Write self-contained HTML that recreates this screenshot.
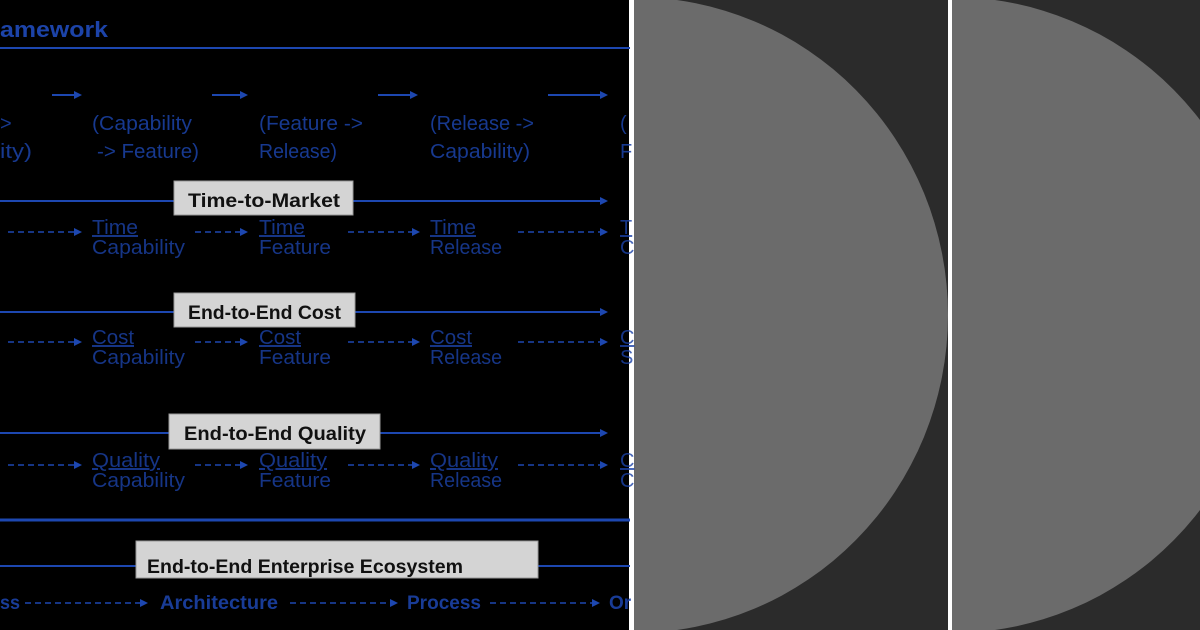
<!DOCTYPE html>
<html><head><style>
html,body{margin:0;padding:0;width:1200px;height:630px;overflow:hidden;background:#2b2b2b}
</style></head><body>
<svg width="1200" height="630" xmlns="http://www.w3.org/2000/svg" style="position:absolute;left:0;top:0">
<defs>
<marker id="ah" markerWidth="8" markerHeight="8" refX="6" refY="4" orient="auto" markerUnits="userSpaceOnUse"><path d="M0,0 L8,4 L0,8 z" fill="#1d47b0"/></marker>
<clipPath id="c1"><rect x="634" y="0" width="314" height="630"/></clipPath>
<clipPath id="c2"><rect x="952" y="0" width="248" height="630"/></clipPath>
</defs>
<rect x="0" y="0" width="630" height="630" fill="#000"/>
<rect x="629" y="0" width="5" height="630" fill="#fff"/>
<rect x="634" y="0" width="315" height="630" fill="#2b2b2b"/>
<ellipse cx="634" cy="315" rx="314" ry="318" fill="#6b6b6b" clip-path="url(#c1)"/>
<rect x="948" y="0" width="4" height="630" fill="#fff"/>
<ellipse cx="952" cy="315" rx="314" ry="318" fill="#6b6b6b" clip-path="url(#c2)"/>
<g font-family="Liberation Sans, sans-serif" fill="#1c43a8">
<text x="0" y="37" font-size="22" font-weight="bold" textLength="108" lengthAdjust="spacingAndGlyphs">amework</text>
<line x1="0" y1="48" x2="630" y2="48" stroke="#1d47b0" stroke-width="2"/>
<g stroke="#1d47b0" stroke-width="2" marker-end="url(#ah)">
<line x1="52" y1="95" x2="80" y2="95"/><line x1="212" y1="95" x2="246" y2="95"/>
<line x1="378" y1="95" x2="416" y2="95"/><line x1="548" y1="95" x2="606" y2="95"/>
</g>
<g font-size="20" opacity="0.85">
<text x="0" y="130">&gt;</text><text x="92" y="130" textLength="100" lengthAdjust="spacingAndGlyphs">(Capability</text><text x="259" y="130" textLength="104" lengthAdjust="spacingAndGlyphs">(Feature -&gt;</text><text x="430" y="130" textLength="104" lengthAdjust="spacingAndGlyphs">(Release -&gt;</text><text x="620" y="130">(</text>
<text x="0" y="158" textLength="32" lengthAdjust="spacingAndGlyphs">ity)</text><text x="97" y="158" textLength="102" lengthAdjust="spacingAndGlyphs">-&gt; Feature)</text><text x="259" y="158" textLength="78" lengthAdjust="spacingAndGlyphs">Release)</text><text x="430" y="158" textLength="100" lengthAdjust="spacingAndGlyphs">Capability)</text><text x="620" y="158">F</text>
</g>
<g stroke="#1d47b0" stroke-width="2" marker-end="url(#ah)">
<line x1="0" y1="201" x2="606" y2="201"/><line x1="0" y1="312" x2="606" y2="312"/><line x1="0" y1="433" x2="606" y2="433"/>
</g>
<g stroke="#1d47b0" stroke-width="1.5" stroke-dasharray="6,4" marker-end="url(#ah)">
<line x1="8" y1="232" x2="80" y2="232"/><line x1="195" y1="232" x2="246" y2="232"/><line x1="348" y1="232" x2="418" y2="232"/><line x1="518" y1="232" x2="606" y2="232"/>
<line x1="8" y1="342" x2="80" y2="342"/><line x1="195" y1="342" x2="246" y2="342"/><line x1="348" y1="342" x2="418" y2="342"/><line x1="518" y1="342" x2="606" y2="342"/>
<line x1="8" y1="465" x2="80" y2="465"/><line x1="195" y1="465" x2="246" y2="465"/><line x1="348" y1="465" x2="418" y2="465"/><line x1="518" y1="465" x2="606" y2="465"/>
<line x1="25" y1="603" x2="146" y2="603"/><line x1="290" y1="603" x2="396" y2="603"/><line x1="490" y1="603" x2="598" y2="603"/>
</g>
<g font-size="20" opacity="0.8" text-decoration="underline">
<text x="92" y="234" textLength="46" lengthAdjust="spacingAndGlyphs">Time</text><text x="259" y="234" textLength="46" lengthAdjust="spacingAndGlyphs">Time</text><text x="430" y="234" textLength="46" lengthAdjust="spacingAndGlyphs">Time</text><text x="620" y="234">T</text>
<text x="92" y="344" textLength="42" lengthAdjust="spacingAndGlyphs">Cost</text><text x="259" y="344" textLength="42" lengthAdjust="spacingAndGlyphs">Cost</text><text x="430" y="344" textLength="42" lengthAdjust="spacingAndGlyphs">Cost</text><text x="620" y="344">C</text>
<text x="92" y="467" textLength="68" lengthAdjust="spacingAndGlyphs">Quality</text><text x="259" y="467" textLength="68" lengthAdjust="spacingAndGlyphs">Quality</text><text x="430" y="467" textLength="68" lengthAdjust="spacingAndGlyphs">Quality</text><text x="620" y="467">C</text>
</g>
<g font-size="20" opacity="0.8">
<text x="92" y="254" textLength="93" lengthAdjust="spacingAndGlyphs">Capability</text><text x="259" y="254" textLength="72" lengthAdjust="spacingAndGlyphs">Feature</text><text x="430" y="254" textLength="72" lengthAdjust="spacingAndGlyphs">Release</text><text x="620" y="254">C</text>
<text x="92" y="364" textLength="93" lengthAdjust="spacingAndGlyphs">Capability</text><text x="259" y="364" textLength="72" lengthAdjust="spacingAndGlyphs">Feature</text><text x="430" y="364" textLength="72" lengthAdjust="spacingAndGlyphs">Release</text><text x="620" y="364">S</text>
<text x="92" y="487" textLength="93" lengthAdjust="spacingAndGlyphs">Capability</text><text x="259" y="487" textLength="72" lengthAdjust="spacingAndGlyphs">Feature</text><text x="430" y="487" textLength="72" lengthAdjust="spacingAndGlyphs">Release</text><text x="620" y="487">C</text>
</g>
<line x1="0" y1="520" x2="630" y2="520" stroke="#1d47b0" stroke-width="3"/>
<line x1="0" y1="566" x2="630" y2="566" stroke="#1d47b0" stroke-width="2"/>
<g font-size="19" font-weight="bold" opacity="0.9">
<text x="0" y="609" textLength="20" lengthAdjust="spacingAndGlyphs">ss</text><text x="160" y="609" textLength="118" lengthAdjust="spacingAndGlyphs">Architecture</text><text x="407" y="609" textLength="74" lengthAdjust="spacingAndGlyphs">Process</text><text x="609" y="609">Or</text>
</g>
</g>
<g font-family="Liberation Sans, sans-serif" font-weight="bold" font-size="19" fill="#111">
<rect x="174" y="181" width="179" height="34" fill="#d4d4d4" stroke="#999"/>
<text x="188" y="207" textLength="152" lengthAdjust="spacingAndGlyphs">Time-to-Market</text>
<rect x="174" y="293" width="181" height="34" fill="#d4d4d4" stroke="#999"/>
<text x="188" y="319" textLength="153" lengthAdjust="spacingAndGlyphs">End-to-End Cost</text>
<rect x="169" y="414" width="211" height="35" fill="#d4d4d4" stroke="#999"/>
<text x="184" y="440" textLength="182" lengthAdjust="spacingAndGlyphs">End-to-End Quality</text>
<rect x="136" y="541" width="402" height="37" fill="#d4d4d4" stroke="#999"/>
<text x="147" y="573" textLength="316" lengthAdjust="spacingAndGlyphs">End-to-End Enterprise Ecosystem</text>
</g>
</svg>
</body></html>
